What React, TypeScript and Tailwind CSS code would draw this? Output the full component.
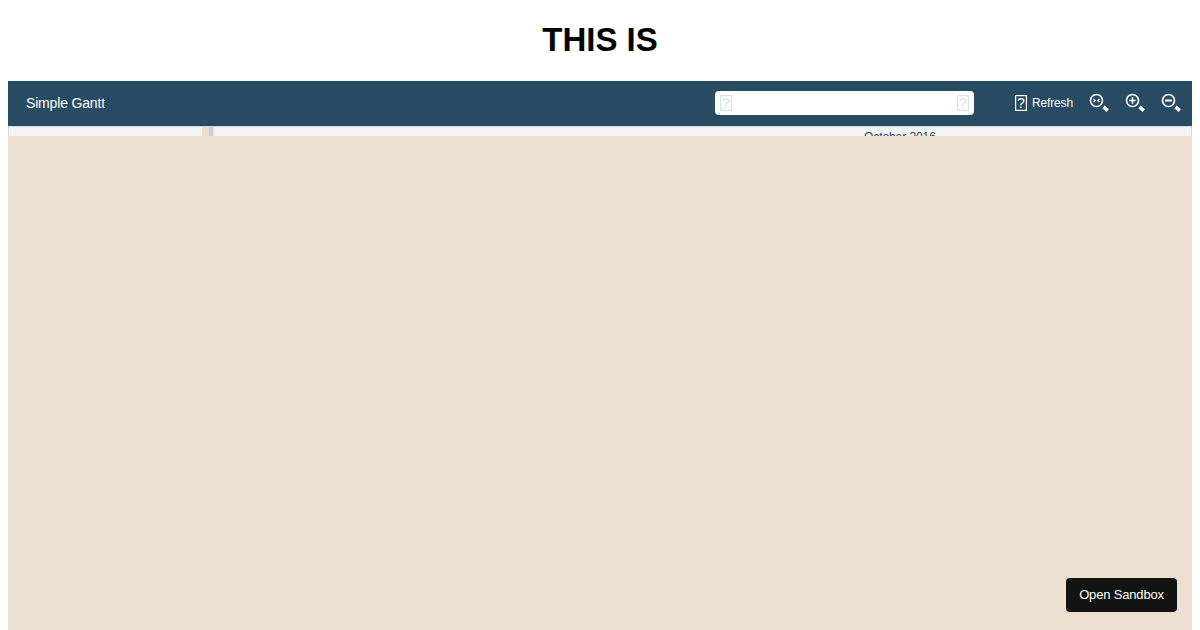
import { ReactNode } from 'react'

function MissingGlyph({ className }: { className: string }) {
  return (
    <svg viewBox="0 0 12 16" className={className} fill="none" aria-hidden="true">
      <rect x="0.6" y="0.6" width="10.8" height="14.8" stroke="currentColor" strokeWidth="1.2" />
      <text x="6" y="13" textAnchor="middle" fontSize="14" fontFamily="Liberation Sans, sans-serif" fill="currentColor">
        ?
      </text>
    </svg>
  )
}

function ZoomIcon({ children }: { children: ReactNode }) {
  return (
    <svg viewBox="0 0 20 20" className="h-5 w-5 text-white" fill="none" aria-hidden="true">
      <circle cx="7.5" cy="7.5" r="6" stroke="currentColor" strokeWidth="1.6" />
      <path d="M14.5 13.8l4.2 3.8" stroke="currentColor" strokeWidth="3.6" />
      {children}
    </svg>
  )
}

export default function App() {
  return (
    <div className="flex h-[630px] flex-col overflow-hidden bg-white px-2 font-['Liberation_Sans',sans-serif]">
      <h1 className="flex h-[81px] items-center justify-center pb-0.5 text-[33px] font-bold text-black">THIS IS</h1>

      {/* Toolbar */}
      <div className="flex h-[45px] shrink-0 items-center bg-[#274b62] pb-px text-white">
        <span className="ml-[18px] text-sm tracking-[-0.17px]">Simple Gantt</span>
        <div className="ml-[610px] flex h-6 w-[259px] items-center justify-between rounded-sm bg-white px-[5px] text-[#d5e6e6]">
          <MissingGlyph className="h-4 w-3" />
          <MissingGlyph className="h-4 w-3" />
        </div>
        <div className="ml-[41px] flex items-center">
          <MissingGlyph className="h-4 w-3 text-white" />
          <span className="ml-[5px] text-xs tracking-[-0.14px]">Refresh</span>
        </div>
        <div className="ml-4 flex items-center gap-4">
          <ZoomIcon>
            <path d="M4.6 6l1.6 1.5-1.6 1.5M10.4 6L8.8 7.5l1.6 1.5" stroke="currentColor" strokeWidth="1.1" />
          </ZoomIcon>
          <ZoomIcon>
            <path d="M4.3 7.5h6.4M7.5 4.3v6.4" stroke="currentColor" strokeWidth="1.6" />
          </ZoomIcon>
          <ZoomIcon>
            <path d="M4 7.5h7" stroke="currentColor" strokeWidth="2" />
          </ZoomIcon>
        </div>
      </div>

      {/* Gantt header, mostly covered by the beige panel */}
      <div className="flex h-2.5 shrink-0 overflow-hidden border-x border-t border-[#d8d8d8] bg-[#f3f3f3]">
        <div className="w-[193px] shrink-0" />
        <div className="w-[7px] shrink-0 bg-[#eee0d0]" />
        <div className="w-1 shrink-0 bg-[#d0d0d0]" />
        <div className="flex-1 border-l border-[#e6e6e6] pl-[650px] text-xs leading-5 tracking-[-0.08px] text-[#274b62]">
          October 2016
        </div>
      </div>

      <div className="flex flex-1 items-end justify-end bg-[#eee0d0] pr-[15px] pb-[18px]">
        <button type="button" className="h-[34px] w-[111px] rounded bg-[#131313] text-[13px] tracking-[-0.17px] text-white">
          Open Sandbox
        </button>
      </div>
    </div>
  )
}
